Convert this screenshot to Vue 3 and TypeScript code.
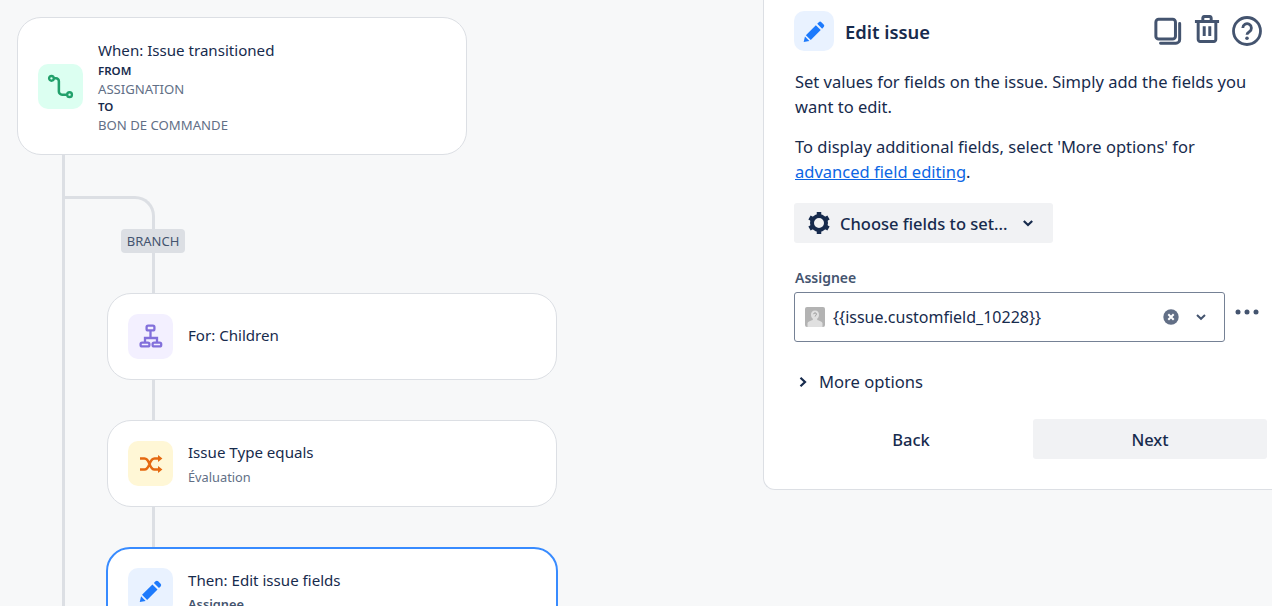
<script setup lang="ts">
const fromTo: { label: string; value: string }[] = [
  { label: 'FROM', value: 'ASSIGNATION' },
  { label: 'TO', value: 'BON DE COMMANDE' },
]
</script>

<template>
  <div class="page">
    <section class="canvas">
      <article class="card trigger">
        <div class="tile green">
          <svg width="29" height="29" viewBox="0 0 32 32" fill="none" stroke="#22a06b" stroke-width="2.600">
            <circle cx="6" cy="7" r="2.600" />
            <circle cx="26" cy="25" r="2.600" />
            <path d="M8.600 7H11a3.200 3.200 0 0 1 3.200 3.200V21.500A3.500 3.500 0 0 0 17.700 25h5.700" stroke-width="2.800" />
          </svg>
        </div>
        <div class="text trigger-text">
          <div class="title">When: Issue transitioned</div>
          <template v-for="row in fromTo" :key="row.label">
            <div class="mini">{{ row.label }}</div>
            <div class="sub caps">{{ row.value }}</div>
          </template>
        </div>
      </article>

      <div class="tree">
        <div class="elbow"></div>
        <div class="badge">BRANCH</div>
        <div class="link"></div>
        <article class="card node">
          <div class="tile purple">
            <svg width="26" height="26" viewBox="0 0 26 26" fill="none" stroke="#8270db" stroke-width="2.300">
              <rect x="8.600" y="1.600" width="7.800" height="4.800" rx="1.500" />
              <rect x="2.600" y="18.600" width="8.800" height="3.800" rx="1.500" />
              <rect x="14.600" y="18.600" width="8.600" height="3.800" rx="1.500" />
              <path d="M12.500 6.500v7.500M7 18.600V14h12v4.600" />
            </svg>
          </div>
          <div class="text lifted"><div class="title">For: Children</div></div>
        </article>
        <div class="link"></div>
        <article class="card node">
          <div class="tile yellow">
            <svg width="26" height="26" viewBox="0 -0.500 26 26" fill="none" stroke="#e56910" stroke-width="2.400">
              <path d="M2 7h4.500c2.500 0 3.500 1.500 5 5.500s2.500 5.500 5 5.500H22M2 18h4.500c2.500 0 3.500-1.500 5-5.500S14 7 16.500 7H22" />
              <path d="M20 3.600 24.400 7 20 10.400zM20 14.600 24.400 18 20 21.400z" fill="#e56910" stroke="none" />
            </svg>
          </div>
          <div class="text lowered">
            <div class="title">Issue Type equals</div>
            <div class="sub small">Évaluation</div>
          </div>
        </article>
        <div class="link"></div>
        <article class="card node selected">
          <div class="tile blue">
            <svg width="25" height="25" viewBox="0 0 26 26" fill="#1d7afc">
              <path d="M18.200 3.500a2 2 0 0 1 2.800 0l2.500 2.500a2 2 0 0 1 0 2.800L21.800 10.500 16.500 5.200zM15 6.700 20.300 12 9.500 22.800 4.200 17.500zM3.200 19 8 23.800 1.800 25z" />
            </svg>
          </div>
          <div class="text selected-text">
            <div class="title">Then: Edit issue fields</div>
            <div class="mini assignee">Assignee</div>
          </div>
        </article>
      </div>
    </section>

    <aside class="panel">
      <header class="head">
        <div class="tile blue small-tile">
          <svg width="24" height="24" viewBox="0 0 26 26" fill="#1d7afc">
            <path d="M18.200 3.500a2 2 0 0 1 2.800 0l2.500 2.500a2 2 0 0 1 0 2.800L21.800 10.500 16.500 5.200zM15 6.700 20.300 12 9.500 22.800 4.200 17.500zM3.200 19 8 23.800 1.800 25z" />
          </svg>
        </div>
        <h2>Edit issue</h2>
        <div class="actions">
          <svg width="28" height="28" viewBox="0 0 30 30" fill="none" stroke="#44546f" stroke-width="3.200">
            <rect x="2" y="2.500" width="21" height="21" rx="3" />
            <path d="M27.500 7v17a4 4 0 0 1-4 4H7" stroke-linecap="round" />
          </svg>
          <svg class="trash" width="26" height="28" viewBox="0 0 28 30" fill="none" stroke="#44546f" stroke-width="3.200">
            <path d="M1 7h26M9.500 7V3.500A2 2 0 0 1 11.500 1.500h5a2 2 0 0 1 2 2V7M4.500 7v19a2.500 2.500 0 0 0 2.500 2.500h14a2.500 2.500 0 0 0 2.500-2.500V7M11 12v10.500M17 12v10.500" />
          </svg>
          <svg width="30" height="30" viewBox="0 0 30 30" fill="none" stroke="#44546f" stroke-width="2.800">
            <circle cx="15" cy="15" r="13.500" />
            <path d="M10.800 12a4.300 4.300 0 1 1 6.500 3.700c-1.500.9-2.300 1.600-2.300 3" />
            <circle cx="15" cy="22.300" r="1.800" fill="#44546f" stroke="none" />
          </svg>
        </div>
      </header>

      <p class="para first">Set values for fields on the issue. Simply add the fields you want to edit.</p>
      <p class="para">To display additional fields, select 'More options' for <a href="#">advanced field editing</a>.</p>

      <button class="choose" type="button">
        <svg width="24" height="24" viewBox="0 0 24 24" fill="none" stroke="#172b4d">
          <circle cx="12" cy="12" r="7" stroke-width="4" />
          <path d="M12 1v4.500M12 18.500V23M2.500 6.500l3.900 2.300M17.600 15.200l3.900 2.300M2.500 17.500l3.900-2.300M17.600 8.800l3.900-2.300" stroke-width="4.500" />
        </svg>
        <span>Choose fields to set...</span>
        <svg class="chev" width="12" height="12" viewBox="0 0 12 12" fill="none" stroke="#172b4d" stroke-width="2.200">
          <path d="M1.800 4 6 8l4.200-4" />
        </svg>
      </button>

      <label class="field-label">Assignee</label>
      <div class="field-row">
        <div class="select">
          <span class="avatar">
            <svg width="20" height="20" viewBox="0 0 20 20">
              <rect width="20" height="20" rx="2" fill="#b3b3b3" />
              <path d="M10 3.500c2.700 0 4 1.800 4 4.200 0 1.800-.8 3.300-1.800 4.100v1.200c2 .5 4.800 1.500 5.300 3V20h-15v-4c.5-1.500 3.300-2.500 5.300-3v-1.200C6.800 11 6 9.500 6 7.700c0-2.400 1.300-4.200 4-4.200z" fill="#e0e0e0" />
              <path d="M8.500 7.200c.2-1.800 3-1.800 3 0 0 1-1.400 1.100-1.400 2.300" fill="none" stroke="#9a9a9a" stroke-width="1" />
            </svg>
          </span>
          <span class="value">&#123;&#123;issue.customfield_10228&#125;&#125;</span>
          <svg class="clear" width="16" height="16" viewBox="0 0 16 16">
            <circle cx="8" cy="8" r="7.700" fill="#626f86" />
            <path d="M5.300 5.300l5.400 5.400M10.700 5.300l-5.400 5.400" stroke="#fff" stroke-width="2" />
          </svg>
          <svg class="chev-small" width="12" height="12" viewBox="0 0 12 12" fill="none" stroke="#44546f" stroke-width="2">
            <path d="M2 4l4 3.800L10 4" />
          </svg>
        </div>
        <svg class="dots" width="24" height="6" viewBox="0 0 24 6" fill="#44546f">
          <circle cx="3" cy="3" r="2.500" /><circle cx="12" cy="3" r="2.500" /><circle cx="21" cy="3" r="2.500" />
        </svg>
      </div>

      <div class="more">
        <svg width="10" height="12" viewBox="0 0 10 12" fill="none" stroke="#172b4d" stroke-width="2.200">
          <path d="M2.500 1.800 7 6l-4.500 4.200" />
        </svg>
        <span>More options</span>
      </div>

      <div class="buttons">
        <button type="button" class="btn">Back</button>
        <button type="button" class="btn next">Next</button>
      </div>
    </aside>
  </div>
</template>

<style>
html, body { margin: 0; background: #f7f8f9; overflow: hidden; }
</style>

<style scoped>
.page {
  display: flex;
  width: 1272px;
  height: 606px;
  overflow: hidden;
  background: #f7f8f9;
  font-family: "Noto Sans", "Open Sans", sans-serif;
  color: #172b4d;
  font-size: 16px;
}
.canvas {
  width: 763px;
  flex: none;
  box-sizing: border-box;
  padding: 17px 0 0 17px;
}
.card {
  display: flex;
  align-items: center;
  gap: 15px;
  box-sizing: border-box;
  width: 450px;
  padding: 0 20px;
  background: #fff;
  border: 1px solid #dcdfe4;
  border-radius: 24px;
}
.trigger { height: 138px; }
.node { height: 87px; }
.selected {
  width: 452px;
  height: 110px;
  padding-left: 20px;
  align-items: flex-start;
  padding-top: 19px;
  border: 2px solid #388bff;
}
.tile {
  flex: none;
  width: 45px;
  height: 45px;
  border-radius: 10px;
  display: flex;
  align-items: center;
  justify-content: center;
}
.green { background: #dcfff1; }
.purple { background: #f3f0ff; }
.yellow { background: #fff7d6; }
.blue { background: #e9f2ff; }
.small-tile { width: 40px; height: 40px; }
.text { min-width: 0; }
.trigger-text { padding-top: 2px; }
.trigger-text .title { margin-bottom: 3px; }
.lifted { padding-bottom: 3px; }
.lowered { padding-top: 2px; }
.selected-text { margin-top: 2px; }
.title { font-size: 15.100px; line-height: 20px; }
.mini { font-size: 11.500px; font-weight: 600; line-height: 16px; }
.sub { color: #626f86; }
.caps { font-size: 13.150px; line-height: 20px; }
.small { font-size: 12.800px; line-height: 20px; margin-top: 5px; }
.assignee { color: #44546f; font-size: 12.800px; margin-top: 6px; }
.tree {
  margin-left: 45px;
  border-left: 3px solid #dcdfe4;
  padding-top: 41px;
  height: 481px;
  box-sizing: content-box;
}
.elbow {
  box-sizing: border-box;
  width: 90px;
  height: 33px;
  border-top: 3px solid #dcdfe4;
  border-right: 3px solid #dcdfe4;
  border-top-right-radius: 20px;
}
.badge {
  box-sizing: border-box;
  width: 64px;
  height: 24px;
  margin-left: 56px;
  border-radius: 4px;
  background: #dcdfe4;
  color: #44546f;
  font-size: 13px;
  line-height: 24px;
  text-align: center;
}
.link {
  width: 3px;
  height: 40px;
  margin-left: 87px;
  background: #dcdfe4;
}
.tree .card { margin-left: 42px; }
.tree .selected { margin-left: 41px; }
.panel {
  box-sizing: border-box;
  width: 509px;
  height: 490px;
  flex: none;
  padding: 11px 5px 0 30px;
  background: #fff;
  border-left: 1px solid #dcdfe4;
  border-bottom: 1px solid #dcdfe4;
  border-bottom-left-radius: 12px;
}
.head { display: flex; align-items: center; gap: 11px; height: 40px; }
h2 { margin: 1px 0 0; font-size: 18.400px; font-weight: 600; }
.actions { margin-left: auto; margin-right: 5px; display: flex; align-items: center; gap: 12px; }
.trash { margin-top: -4px; }
.para { margin: 0 10px 14px 1px; line-height: 25px; font-size: 16.500px; }
.first { margin-top: 18px; margin-bottom: 15px; }
a { color: #0c66e4; }
.choose {
  display: flex;
  align-items: center;
  width: 259px;
  height: 40px;
  margin-top: 19px;
  padding: 0 0 0 13px;
  border: 0;
  border-radius: 3px;
  background: #f1f2f4;
  color: #172b4d;
  font: 500 16.500px "Noto Sans", "Open Sans", sans-serif;
}
.choose span { margin-left: 9px; }
.chev { margin-left: 14px; }
.field-label {
  display: block;
  margin: 25px 0 0 1px;
  font-size: 14px;
  font-weight: 600;
  line-height: 20px;
  color: #44546f;
}
.field-row { display: flex; align-items: flex-start; margin-top: 4px; }
.select {
  box-sizing: border-box;
  display: flex;
  align-items: center;
  width: 431px;
  height: 50px;
  padding: 0 17px 0 10px;
  border: 1px solid #758195;
  border-radius: 3px;
}
.avatar { display: flex; }
.value { margin-left: 8px; flex: 1; font-size: 16px; }
.chev-small { margin-left: 16px; }
.dots { margin: 17px 0 0 10px; }
.more {
  display: flex;
  align-items: center;
  gap: 11px;
  margin: 28px 0 0 4px;
  height: 24px;
  line-height: 24px;
  font-size: 16.600px;
}
.buttons { display: flex; gap: 5px; margin-top: 25px; }
.btn {
  flex: none;
  width: 234px;
  height: 40px;
  border: 0;
  border-radius: 3px;
  background: transparent;
  color: #172b4d;
  font: 500 16.500px "Noto Sans", "Open Sans", sans-serif;
}
.next { background: #f1f2f4; }
</style>
